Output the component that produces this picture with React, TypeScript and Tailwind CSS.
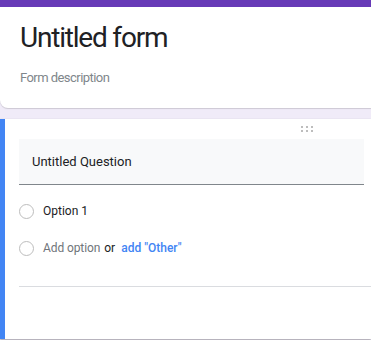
import React from "react";

export default function App() {
  return (
    <div className="w-[371px] h-[340px] overflow-hidden bg-[#f0ebf8]" style={{ fontFamily: "Roboto, 'Liberation Sans', sans-serif" }}>
      <div className="bg-white rounded-bl-lg border-t-[7px] border-[#673ab7] h-[108px] shadow-[0_1px_1px_rgba(0,0,0,0.15)] pl-5">
        <div className="pt-[11px] text-[28px] leading-[40px] tracking-[-1.2px] text-[#202124]">Untitled form</div>
        <div className="mt-[12px] text-[13px] leading-[16px] tracking-[-0.55px] text-[#80868b]">Form description</div>
      </div>
      <div className="mt-[11px] bg-white h-[220px] border-l-[5px] border-[#4285f4] shadow-[0_1px_2px_rgba(0,0,0,0.35)] flex flex-col">
        <div className="flex h-[20px] pl-[296px] pt-[7px]">
          <svg width="12" height="6" viewBox="0 0 12 6">
            {[0, 5, 10].map((x) => [0, 4].map((y) => <rect key={`${x}-${y}`} x={x} y={y} width="2" height="2" fill="#bdbdbd" />))}
          </svg>
        </div>
        <div className="ml-[14px] mr-[7px] h-[46px] bg-[#f8f9fa] border-b border-[#80868b] flex items-center pl-[13px] text-[13px] text-[#202124]">
          Untitled Question
        </div>
        <div className="ml-[14px] mt-[17px] flex items-center h-[18px]">
          <div className="w-[15px] h-[15px] rounded-full border-[1.5px] border-[#bdbdbd]" />
          <span className="ml-[9px] text-[12px] text-[#202124]">Option 1</span>
        </div>
        <div className="ml-[14px] mt-[19px] flex items-center h-[18px] text-[12px]">
          <div className="w-[15px] h-[15px] rounded-full border-[1.5px] border-[#bdbdbd]" />
          <span className="ml-[9px] text-[#70757a] tracking-[-0.1px]">Add option</span>
          <span className="ml-[4px] text-[#202124]">or</span>
          <span className="ml-[6px] text-[#4285f4] font-medium">add "Other"</span>
        </div>
        <div className="ml-[14px] mt-[29px] border-t border-[#dadce0]" />
      </div>
    </div>
  );
}
